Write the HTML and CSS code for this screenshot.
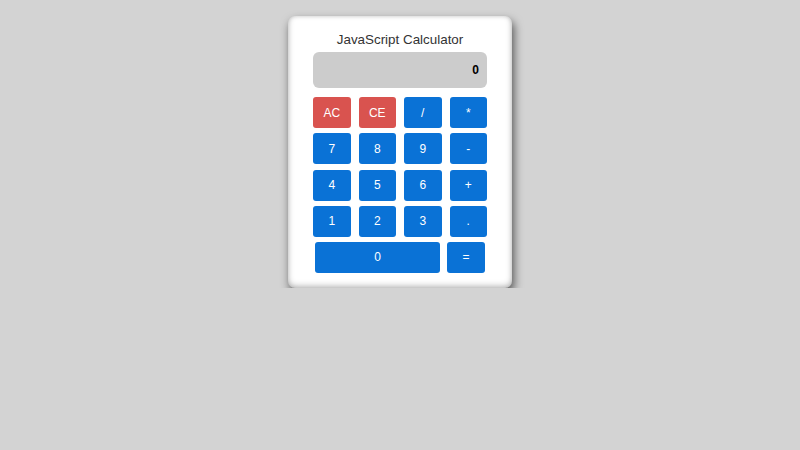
FILE: index.html
```html
<!DOCTYPE html>
<html>
<head>
<meta charset="utf-8">
<link rel="stylesheet" href="styles.css">
</head>
<body>
<div class="calc">
  <h1 class="title">JavaScript Calculator</h1>
  <div class="display">0</div>
  <div class="keys">
    <button class="key red">AC</button>
    <button class="key red">CE</button>
    <button class="key">/</button>
    <button class="key">*</button>
    <button class="key">7</button>
    <button class="key">8</button>
    <button class="key">9</button>
    <button class="key">-</button>
    <button class="key">4</button>
    <button class="key">5</button>
    <button class="key">6</button>
    <button class="key">+</button>
    <button class="key">1</button>
    <button class="key">2</button>
    <button class="key">3</button>
    <button class="key">.</button>
  </div>
  <div class="last">
    <button class="key zero">0</button>
    <button class="key eq">=</button>
  </div>
</div>
</body>
</html>
```
FILE: styles.css
```css
html, body {
  margin: 0;
  padding: 0;
  background: #d3d3d3;
  font-family: "Liberation Sans", Arial, sans-serif;
}
.calc {
  box-sizing: border-box;
  width: 224px;
  height: 272px;
  margin: 16px auto 0;
  padding: 16px 25px 0;
  background: #fff;
  border-radius: 7px;
  box-shadow: 2px 5px 10px rgba(0,0,0,0.6), inset 0 -2px 6px rgba(0,0,0,0.25), inset 0 0 4px rgba(0,0,0,0.12);
}
.title {
  margin: 0;
  font-size: 13.4px;
  font-weight: normal;
  color: #333;
  text-align: center;
  line-height: 16px;
}
.display {
  margin-top: 4px;
  height: 36px;
  background: #cccccc;
  border-radius: 6px;
  text-align: right;
  font-weight: bold;
  font-size: 12px;
  line-height: 36px;
  padding-right: 8px;
  color: #000;
}
.keys {
  margin-top: 9px;
  display: grid;
  grid-template-columns: repeat(4, 37.5px);
  column-gap: 8px;
  row-gap: 5.3px;
}
.key {
  height: 31px;
  border: none;
  border-radius: 3px;
  background: #0a72d6;
  color: #fff;
  font-family: "Liberation Sans", Arial, sans-serif;
  font-size: 12px;
  padding: 0;
}
.red {
  background: #d9534f;
}
.last {
  display: flex;
  margin-top: 5px;
  padding: 0 2px;
  justify-content: space-between;
}
.zero {
  width: 125px;
}
.eq {
  width: 38px;
}
```
